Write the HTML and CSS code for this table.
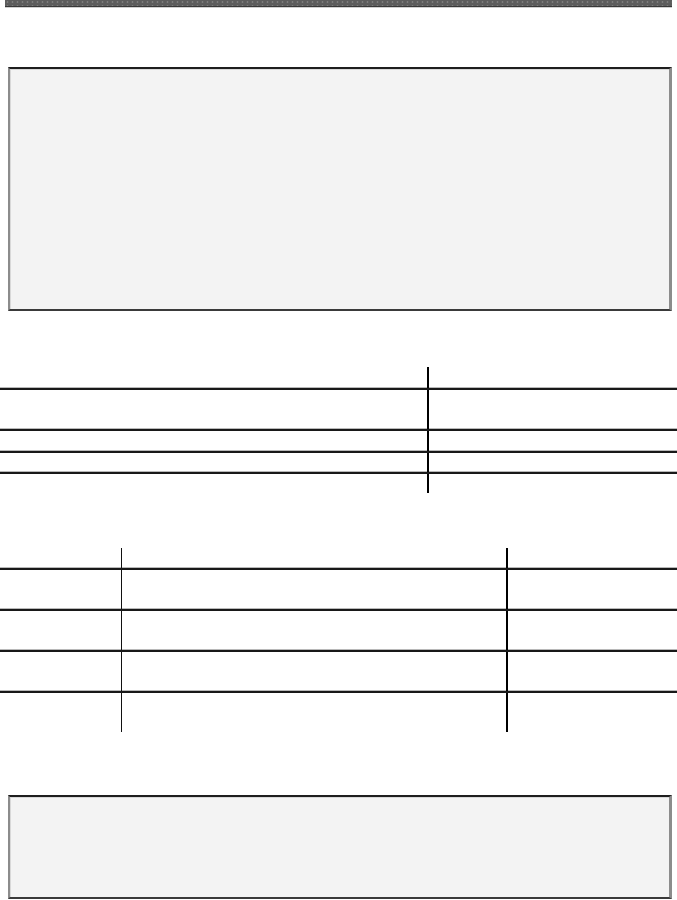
FILE: index.html
```html
<!DOCTYPE html>
<html lang="en">
<head>
<meta charset="utf-8">
<title>Page</title>
<link rel="stylesheet" href="styles.css">
</head>
<body>
<div class="topbar"></div>
<section class="panel panel-main"></section>
<div class="grid grid-two">
  <div class="row head"><div class="cell"></div><div class="cell"></div></div>
  <div class="row tall"><div class="cell"></div><div class="cell"></div></div>
  <div class="row r20"><div class="cell"></div><div class="cell"></div></div>
  <div class="row r19"><div class="cell"></div><div class="cell"></div></div>
  <div class="row r19"><div class="cell"></div><div class="cell"></div></div>
</div>
<div class="grid grid-three">
  <div class="row head"><div class="cell"></div><div class="cell"></div><div class="cell"></div></div>
  <div class="row tall"><div class="cell"></div><div class="cell"></div><div class="cell"></div></div>
  <div class="row tall"><div class="cell"></div><div class="cell"></div><div class="cell"></div></div>
  <div class="row tall"><div class="cell"></div><div class="cell"></div><div class="cell"></div></div>
  <div class="row tall"><div class="cell"></div><div class="cell"></div><div class="cell"></div></div>
</div>
<section class="panel panel-foot"></section>
</body>
</html>
```
FILE: styles.css
```css
html, body {
  margin: 0;
  padding: 0;
  background: #ffffff;
  font-family: "Liberation Sans", Arial, sans-serif;
}

.topbar {
  margin: 0 5px;
  height: 6px;
  background-color: #5c5c5c;
  background-image: radial-gradient(circle, #7c7c7c 0.8px, transparent 1.2px);
  background-size: 5px 4px;
  border-bottom: 1px solid #383838;
  box-shadow: 0 1px 0 #cfcfcf;
}

.panel {
  margin: 0 5px 0 8px;
  background: #f3f3f3;
  border-top: 2px solid #1e1e1e;
  border-left: 2px solid #8c8c8c;
  border-right: 3px solid #8c8c8c;
  border-bottom: 2px solid #3a3a3a;
  box-shadow: inset 1px 1px 0 #d8d8d8;
}

.panel-main {
  margin-top: 60px;
  height: 240px;
}

.panel-foot {
  margin-top: 63px;
  height: 100px;
}

.grid {
  width: 100%;
}

.grid-two {
  margin-top: 56px;
}

.grid-three {
  margin-top: 55px;
}

.row {
  display: grid;
}

.grid-two .row {
  grid-template-columns: 429px 1fr;
}

.grid-three .row {
  grid-template-columns: 122px 386px 1fr;
}

.row + .row {
  border-top: 2px solid #181818;
  box-shadow: 0 -1px 0 #b8b8b8;
}

.grid-two .cell:first-child {
  border-right: 2px solid #000;
}

.grid-three .cell:first-child {
  border-right: 1px solid #111;
}

.grid-three .cell:nth-child(2) {
  border-right: 2px solid #000;
}

.grid-two .head { height: 21px; }
.grid-three .head { height: 20px; }
.tall { height: 39px; }
.r20 { height: 20px; }
.r19 { height: 19px; }
```
